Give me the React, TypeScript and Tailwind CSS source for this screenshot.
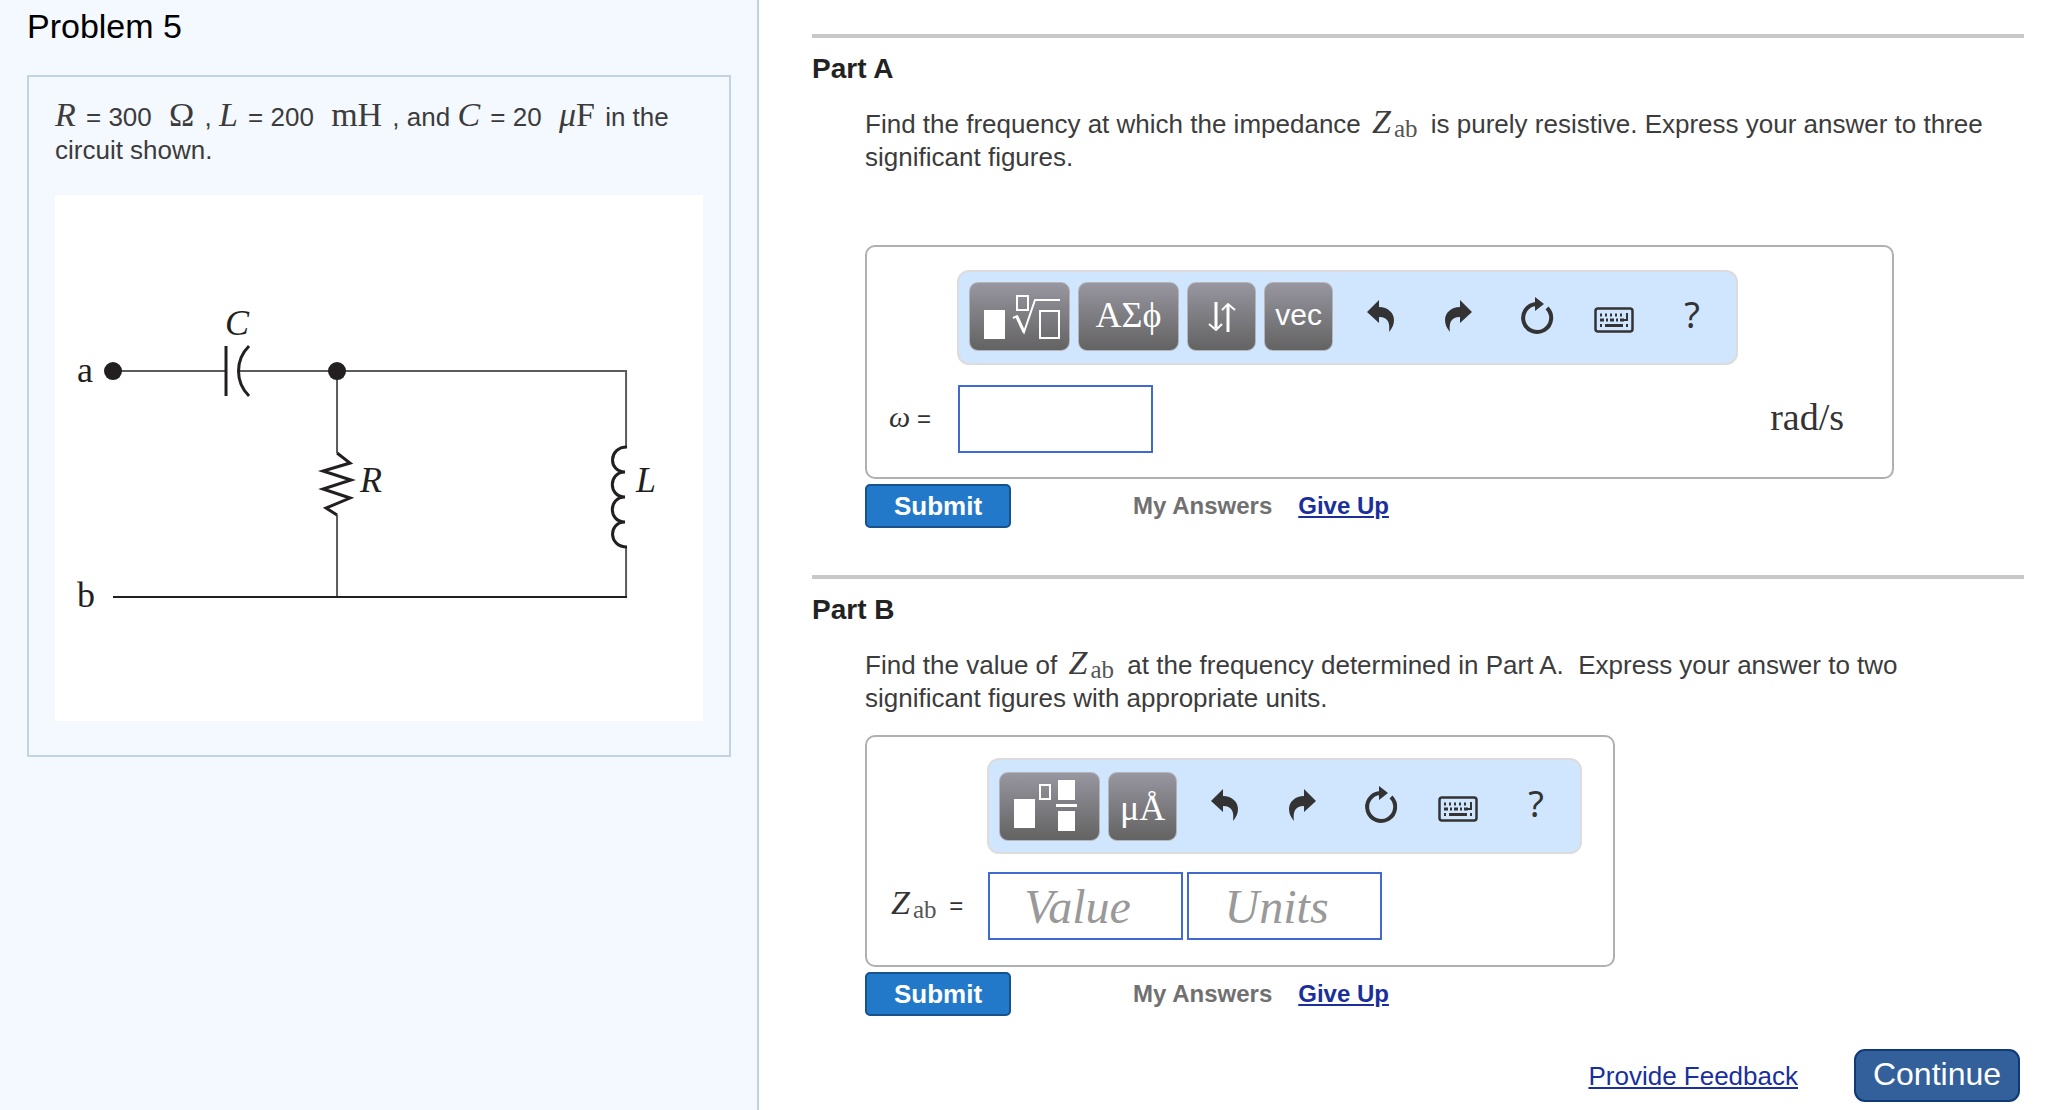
import type { ReactNode } from "react";

function Var({ children }: { children: ReactNode }) {
  return <i className="mr-[3px] font-['Liberation_Serif',serif] text-[34px] leading-0">{children}</i>;
}

function Unit({ children }: { children: ReactNode }) {
  return <span className="mr-[3px] ml-[10px] font-['Liberation_Serif',serif] text-[34px] leading-0">{children}</span>;
}

function Zab() {
  return (
    <span className="mr-[6px] ml-1 font-['Liberation_Serif',serif] leading-0">
      <i className="mr-[3px] text-[34px] leading-0">Z</i>
      <sub className="-bottom-1 text-[25px] leading-0 text-[#555]">ab</sub>
    </span>
  );
}

function Circuit() {
  return (
    <svg viewBox="0 0 648 526" className="block w-full bg-white" role="img" aria-label="Circuit with C, R and L">
      <g fill="none" stroke="#5c5b5d" strokeWidth="2">
        <path d="M58 176H171M184 176H571V252M571 352V401M282 176V258M282 320V401" />
        <path d="M58 402H572" stroke="#231f20" />
      </g>
      <g fill="none" stroke="#231f20" strokeWidth="3" strokeLinejoin="miter">
        <path d="M171 151V201M194 151C180 165 180 187 194 201" />
        <path d="M282 258L295 268L268 276L296 285L268 294L295 303L271 313L282 320" />
        <path d="M572 252C553 252 553 277 570 277C553 277 553 302 570 302C553 302 553 327 570 327C553 327 553 352 572 352" />
      </g>
      <circle cx="58" cy="176" r="9" fill="#231f20" />
      <circle cx="282" cy="176" r="9" fill="#231f20" />
      <g fill="#231f20" fontFamily="'Liberation Serif', serif" fontSize="36">
        <text x="22" y="187">a</text>
        <text x="22" y="412">b</text>
        <g fontStyle="italic">
          <text x="170" y="140">C</text>
          <text x="305" y="297">R</text>
          <text x="581" y="297">L</text>
        </g>
      </g>
    </svg>
  );
}

function Key({ label, wide, children }: { label: string; wide?: boolean; children: ReactNode }) {
  return (
    <button
      type="button"
      aria-label={label}
      className={
        "flex h-[69px] items-center justify-center rounded-[9px] border border-[#b5b5b8] bg-linear-to-b from-[#9896a0] to-[#636363] text-white " +
        (wide ? "w-[101px]" : "w-[69px]")
      }
    >
      {children}
    </button>
  );
}

function Tool({ label, children }: { label: string; children: ReactNode }) {
  return (
    <button type="button" aria-label={label} className="flex h-[69px] w-[78px] items-center justify-center text-[#333]">
      {children}
    </button>
  );
}

function CommonTools() {
  return (
    <div className="flex">
      <Tool label="Undo">
        <svg width="28" height="36" viewBox="-1 -1 28 36" fill="currentColor">
          <path d="M0 12L12 0V7C21 7 27 13 27 20C27 25 25 28 22 32C23 24 22 17 12 17V23Z" />
        </svg>
      </Tool>
      <Tool label="Redo">
        <svg width="28" height="36" viewBox="-1 -1 28 36" fill="currentColor">
          <path d="M27 12L15 0V7C6 7 0 13 0 20C0 25 2 28 5 32C4 24 5 17 15 17V23Z" />
        </svg>
      </Tool>
      <Tool label="Reset">
        <svg width="36" height="40" viewBox="0 0 36 40">
          <path d="M29 11A14 14 0 1 1 18 7" fill="none" stroke="currentColor" strokeWidth="4" />
          <path d="M17 0L26 7L17 14Z" fill="currentColor" />
        </svg>
      </Tool>
      <Tool label="Keyboard">
        <svg width="40" height="34" viewBox="0 0 40 34" fill="none" stroke="currentColor">
          <rect x="1.500" y="8.500" width="37" height="23" rx="2.500" strokeWidth="2.500" />
          <path d="M6 15H31" strokeWidth="3" strokeDasharray="2 3" />
          <path d="M6 20H31" strokeWidth="3" strokeDasharray="4 2 2 2" />
          <path d="M33 13V20H30" strokeWidth="2" />
          <path d="M6 25.500H8M11 25.500H29M32 25.500H34" strokeWidth="3" />
        </svg>
      </Tool>
      <Tool label="Help">
        <span className="pb-1 font-['Noto_Sans','Open_Sans',sans-serif] text-[36px] leading-none">?</span>
      </Tool>
    </div>
  );
}

function Actions() {
  return (
    <div className="mt-[5px] flex items-center">
      <button
        type="button"
        className="h-11 w-[146px] rounded-[5px] border-2 border-[#17528c] bg-[#2379c9] text-[26px] leading-none font-bold text-white"
      >
        Submit
      </button>
      <span className="ml-[122px] text-[24px] leading-8 font-bold text-[#707070]">My Answers</span>
      <a href="#give-up" className="ml-[26px] text-[24px] leading-8 font-bold text-[#1a2f9c] underline">
        Give Up
      </a>
    </div>
  );
}

const heading = "mt-[13px] text-[28px] leading-9 font-bold text-[#222]";
const prompt = "pr-[22px] text-[26px] leading-[33px] text-[#3c3c3c]";
const card = "max-w-full rounded-[10px] border-2 border-[#b0b0b0]";
const toolbar = "flex w-fit items-center gap-2 rounded-[12px] border-2 border-[#dcdcdc] bg-[#d0e5fe] pl-[10px]";
const field =
  "h-[68px] w-[195px] border-2 border-[#4169d2] bg-white pr-4 text-center font-['Liberation_Serif',serif] text-[48px] italic leading-none text-[#333] outline-none placeholder:text-[#999]";

export default function App() {
  return (
    <div className="flex min-h-screen bg-white font-['Liberation_Sans',Arial,sans-serif]">
      <aside className="w-[37.1%] shrink-0 border-r-2 border-[#c2d0e3] bg-[#f4f9ff] pt-[6px] pr-[26px] pl-[27px]">
        <h1 className="text-[34px] leading-10 text-black">Problem 5</h1>
        <section className="mt-[29px] border-2 border-[#c2d3e3] px-[26px] pt-[24px] pb-[34px]">
          <p className="mb-[28px] text-[26px] leading-[33px] text-[#3c3c3c]">
            <Var>R</Var> = 300 <Unit>Ω</Unit> , <Var>L</Var> = 200 <Unit>mH</Unit> , and <Var>C</Var> = 20{" "}
            <Unit>
              <i>μ</i>F
            </Unit>{" "}
            in the circuit shown.
          </p>
          <Circuit />
        </section>
      </aside>

      <main className="flex min-w-0 flex-1 flex-col pr-[22px] pl-[53px]">
        <section className="mt-[34px] border-t-4 border-[#c8c8c8]">
          <h2 className={heading}>Part A</h2>
          <div className="mt-[21px] ml-[53px]">
            <p className={prompt}>
              Find the frequency at which the impedance <Zab /> is purely resistive. Express your answer to three
              significant figures.
            </p>
            <div className={card + " mt-[71px] w-[1029px] pt-[23px] pb-[24px]"}>
              <div className={toolbar + " ml-[90px] h-[95px] pr-[5px] pb-[2px]"}>
                <Key label="Templates" wide>
                  <svg width="76" height="46" viewBox="0 0 76 46" fill="none" stroke="white" strokeWidth="2" className="ml-1">
                    <rect x="0" y="16" width="21" height="29" fill="white" stroke="none" />
                    <rect x="33" y="2" width="11" height="14" />
                    <path d="M29 24L33 22L40 38L51 6H76" />
                    <path d="M33 23L40 38" strokeWidth="3" />
                    <rect x="56" y="17" width="19" height="27" />
                  </svg>
                </Key>
                <Key label="Greek letters" wide>
                  <span className="pb-1 font-['Liberation_Serif',serif] text-[36px] leading-none">ΑΣϕ</span>
                </Key>
                <Key label="Arrows">
                  <svg width="28" height="32" viewBox="0 0 28 32" fill="none" stroke="white" strokeWidth="3">
                    <path d="M8 1V27M20 31V4" />
                    <path d="M1 23L8 29L14 23M14 9L20 3L27 9" strokeWidth="2" />
                  </svg>
                </Key>
                <Key label="Vectors">
                  <span className="pb-1 text-[30px] leading-none">vec</span>
                </Key>
                <CommonTools />
              </div>
              <div className="mt-5 flex items-center">
                <label htmlFor="omega" className="w-[91px] pl-[22px] text-[24px] leading-8 text-[#333]">
                  <i className="font-['Liberation_Serif',serif] text-[30px] leading-0">ω</i> =
                </label>
                <input id="omega" type="text" className={field} />
                <span className="mr-[48px] ml-auto pb-1 font-['Liberation_Serif',serif] text-[38px] leading-none text-[#333]">
                  rad/s
                </span>
              </div>
            </div>
            <Actions />
          </div>
        </section>

        <section className="mt-[47px] border-t-4 border-[#c8c8c8]">
          <h2 className={heading}>Part B</h2>
          <div className="mt-[21px] ml-[53px]">
            <p className={prompt}>
              Find the value of <Zab /> at the frequency determined in Part A.&nbsp; Express your answer to two
              significant figures with appropriate units.
            </p>
            <div className={card + " mt-[20px] w-[750px] pt-[21px] pb-[25px]"}>
              <div className={toolbar + " ml-[120px] h-[96px] pr-[5px]"}>
                <Key label="Templates" wide>
                  <svg width="64" height="54" viewBox="0 0 64 54" fill="white" className="mr-2">
                    <rect x="0" y="20" width="21" height="29" />
                    <rect x="26" y="6" width="10" height="14" fill="none" stroke="white" strokeWidth="2" />
                    <rect x="44" y="1" width="17" height="20" />
                    <rect x="42" y="25" width="21" height="3" />
                    <rect x="44" y="32" width="17" height="20" />
                  </svg>
                </Key>
                <Key label="Units">
                  <span className="pt-1 font-['Liberation_Serif',serif] text-[36px] leading-none">μÅ</span>
                </Key>
                <CommonTools />
              </div>
              <div className="mt-[18px] flex items-center">
                <label htmlFor="zab-value" className="w-[121px] pl-[20px] text-[24px] leading-8 text-[#333]">
                  <Zab /> =
                </label>
                <input id="zab-value" type="text" placeholder="Value" className={field} />
                <input type="text" aria-label="Units" placeholder="Units" className={field + " ml-1"} />
              </div>
            </div>
            <Actions />
          </div>
        </section>

        <footer className="mt-auto mb-2 flex items-center justify-end pr-1">
          <a href="#feedback" className="text-[26px] leading-8 text-[#1a2f9c] underline">
            Provide Feedback
          </a>
          <button
            type="button"
            className="ml-14 h-[53px] w-[166px] rounded-[11px] border-2 border-[#0f3a75] bg-[#335f9b] pb-1 text-[32px] leading-none text-white"
          >
            Continue
          </button>
        </footer>
      </main>
    </div>
  );
}
